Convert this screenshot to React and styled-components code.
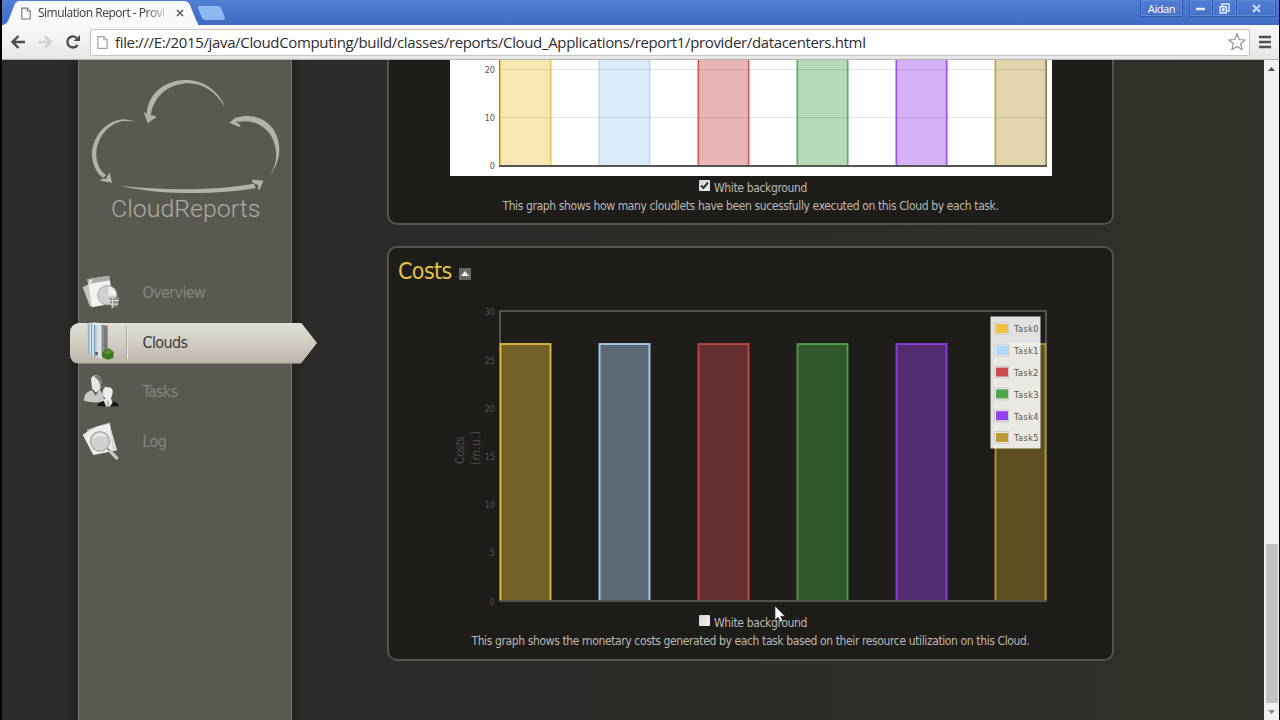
import React, { useState } from "react";
import styled, { createGlobalStyle } from "styled-components";

const GlobalStyle = createGlobalStyle`
  * {
    box-sizing: border-box;
  }
  body {
    margin: 0;
    background: #000;
    overflow: hidden;
  }
`;

const Window = styled.div`
  display: flex;
  flex-direction: column;
  width: 1280px;
  height: 720px;
  padding: 0 1px 0 2px;
  background: #000;
  overflow: hidden;
  font-family: "DejaVu Sans Condensed", "DejaVu Sans", sans-serif;
`;

const TitleBar = styled.div`
  display: flex;
  justify-content: space-between;
  height: 25px;
  flex: none;
  background: linear-gradient(#4f7ed4, #3f6bc3);
`;

const Tabs = styled.div`
  display: flex;
`;

const Tab = styled.div`
  display: grid;
  width: 196px;
  height: 25px;
  > * {
    grid-area: 1 / 1;
  }
`;

const TabContent = styled.div`
  display: flex;
  align-items: center;
  padding: 1px 0 0 19px;
`;

const TabTitle = styled.div`
  width: 132px;
  margin-left: 7px;
  font: 12px/18px "Open Sans", sans-serif;
  letter-spacing: -0.5px;
  white-space: nowrap;
  color: #3c3c40;
  -webkit-mask-image: linear-gradient(to right, #000 108px, transparent 132px);
  mask-image: linear-gradient(to right, #000 108px, transparent 132px);
`;

const TabClose = styled.svg`
  margin-left: 6px;
`;

const WindowButtons = styled.div`
  display: flex;
  padding-right: 3px;
`;

const WindowButton = styled.div`
  display: flex;
  align-items: center;
  justify-content: center;
  width: ${(p) => p.$width}px;
  height: 17px;
  margin-right: ${(p) => p.$gap || 0}px;
  border: 1px solid #3259a8;
  border-top: none;
  border-left-width: ${(p) => (p.$joined ? 0 : 1)}px;
  box-shadow: inset 0 0 0 1px #6088d4;
  color: #fff;
  font: 11px "Open Sans", sans-serif;
  letter-spacing: -0.4px;
`;

const Toolbar = styled.div`
  display: flex;
  align-items: center;
  flex: none;
  height: 35px;
  padding: 0 6px 0 9px;
  background: linear-gradient(#f9f9fa, #e6e6e7);
  border-bottom: 1px solid #b4b4b4;
`;

const AddressBar = styled.div`
  display: flex;
  align-items: center;
  width: 1160px;
  height: 27px;
  margin-left: 8px;
  padding: 0 3px 0 6px;
  border: 1px solid #c4c4c6;
  border-radius: 2px;
  background: #fff;
`;

const Url = styled.div`
  flex: 1;
  margin-left: 7px;
  font: 15px/22px "Open Sans", sans-serif;
  letter-spacing: -0.345px;
  color: #2d2d31;
  white-space: nowrap;
`;

const MenuButton = styled.svg`
  margin-left: 9px;
`;

const Viewport = styled.div`
  display: flex;
  height: 660px;
  overflow: hidden;
`;

const Page = styled.div`
  display: flex;
  width: 1262px;
  background: linear-gradient(to right, #2c2b2a, #2d2c29 50%, #302f28);
`;

const Sidebar = styled.div`
  width: 214px;
  margin-left: 76px;
  background: #5a5951;
  border: 1px solid #77766f;
  border-width: 0 1px;
  box-shadow: 0 0 12px 1px #1b1a17;
`;

const Logo = styled.svg`
  display: block;
  height: 170px;
`;

const Menu = styled.nav`
  display: flex;
  flex-direction: column;
  gap: 8.5px;
  padding-top: 43px;
`;

const MenuItem = styled.div`
  display: flex;
  align-items: center;
  width: 249px;
  height: 41px;
  margin-left: -9px;
  padding: 0 0 2px 12px;
  border-radius: 9px 0 0 9px;
  color: ${(p) => (p.$active ? "#3d3c38" : "#85847d")};
  font-size: 16px;
  letter-spacing: -0.65px;
  background: ${(p) => (p.$active ? "linear-gradient(#e0e0d6, #cfcabf 55%, #b9b2a8)" : "none")};
  clip-path: ${(p) => (p.$active ? "polygon(0 0, 231px 0, 247px 50%, 231px 100%, 0 100%)" : "none")};
`;

const IconSlot = styled.div`
  display: flex;
  align-items: center;
  width: 45px;
  height: 33px;
  margin-right: 15.5px;
  border-right: 1px solid ${(p) => (p.$active ? "#a9a69a" : "transparent")};
  box-shadow: ${(p) => (p.$active ? "1px 0 #e9e8e0" : "none")};
`;

const Content = styled.main`
  display: flex;
  flex-direction: column;
  gap: 21px;
  width: 727px;
  margin-left: 95px;
`;

const Card = styled.section`
  display: flex;
  flex-direction: column;
  align-items: center;
  width: 727px;
  height: ${(p) => p.$height}px;
  border: 2px solid #54534e;
  border-top-width: ${(p) => (p.$cut ? 0 : 2)}px;
  border-radius: ${(p) => (p.$cut ? "0 0 10px 10px" : "10px")};
  background: #1e1d1a;
`;

const CardTitle = styled.h2`
  display: flex;
  align-items: center;
  gap: 7px;
  align-self: flex-start;
  height: 28px;
  margin: 9px 0 0 9px;
  font-size: 23px;
  font-weight: 400;
  letter-spacing: -0.6px;
  color: #e3c343;
`;

const Collapse = styled.span`
  display: flex;
  align-items: center;
  justify-content: center;
  width: 12px;
  height: 12px;
  margin-top: 5px;
  background: #686762;
`;

const Chart = styled.svg`
  display: block;
  flex: none;
  background: ${(p) => (p.$white ? "#fff" : "none")};
`;

const Option = styled.label`
  display: flex;
  align-items: center;
  gap: 4px;
  height: 18px;
  margin-top: 3px;
  margin-left: 5px;
  font-size: 12px;
  letter-spacing: -0.36px;
  color: #bcb9b2;
`;

const Box = styled.span`
  display: flex;
  width: 11px;
  height: 11px;
  margin-bottom: 5px;
  background: linear-gradient(135deg, #d3d3d3, #f2f2f2);
  border-radius: 1px;
`;

const HiddenInput = styled.input`
  display: none;
`;

const Caption = styled.p`
  margin: 0;
  font-size: 12px;
  line-height: 18px;
  letter-spacing: -0.38px;
  white-space: nowrap;
  color: #bcb9b2;
`;

const Scrollbar = styled.div`
  display: flex;
  flex-direction: column;
  align-items: center;
  justify-content: space-between;
  width: 15px;
  background: #f0f0f0;
`;

const Thumb = styled.div`
  width: 12px;
  height: 159px;
  margin-top: auto;
  background: #c1c1c1;
`;

const Cursor = styled.svg`
  position: absolute;
  left: 774px;
  top: 605px;
`;

const tasks = [
  { name: "Task0", color: "#edc240", light: "#f8e6b3", dark: "#716028", x: 500 },
  { name: "Task1", color: "#afd8f8", light: "#dbecfb", dark: "#5a6974", x: 599 },
  { name: "Task2", color: "#cb4b4b", light: "#e8b4b4", dark: "#632f2e", x: 698 },
  { name: "Task3", color: "#4da74d", light: "#b6dab7", dark: "#30572c", x: 797 },
  { name: "Task4", color: "#9440ed", light: "#d5b1f8", dark: "#522a6e", x: 896 },
  { name: "Task5", color: "#bd9b33", light: "#e2d5ab", dark: "#5c4e20", x: 995 },
];

const PageIcon = ({ width, height, color }) => (
  <svg width={width} height={height} viewBox="0 0 12 15" fill="#fff" stroke={color} strokeWidth="1.3">
    <path d="M1 1H7.5L11 4.5V14H1Z" />
    <path d="M7.5 1V4.5H11" />
  </svg>
);

const CloudletsChart = () => (
  <Chart $white width="602" height="116" viewBox="450 60 602 116">
    {tasks.map((t) => (
      <rect key={t.name} x={t.x} y="60" width="51" height="106" fill={t.light} />
    ))}
    <path d="M500 69.5H1046M500 117.5H1046" stroke="#000" strokeOpacity=".1" />
    {tasks.map((t) => (
      <path
        key={t.name}
        d={`M${t.x + 0.3} 60V166M${t.x + 50.7} 60V166`}
        stroke={t.color}
        strokeOpacity=".85"
        strokeWidth="1.7"
      />
    ))}
    <path d="M499.5 60V166M1046.5 60V166" stroke="#545454" strokeOpacity=".7" />
    <path d="M499 166H1047" stroke="#545454" strokeWidth="2" />
    <g fontSize="9" fill="#545454" textAnchor="end">
      <text x="495" y="73">20</text>
      <text x="495" y="121">10</text>
      <text x="495" y="169">0</text>
    </g>
  </Chart>
);

const CostsChart = () => (
  <Chart width="602" height="326" viewBox="450 285 602 326">
    <rect x="500" y="311" width="546" height="290" fill="none" stroke="#545350" strokeWidth="2" />
    {tasks.map((t) => (
      <g key={t.name}>
        <rect x={t.x} y="344" width="51" height="256" fill={t.dark} />
        <path
          d={`M${t.x + 0.5} 600V344H${t.x + 50.5}V600`}
          fill="none"
          stroke={t.color}
          strokeOpacity=".85"
          strokeWidth="2"
        />
      </g>
    ))}
    <path d="M499 601H1047" stroke="#545350" strokeWidth="2" />
    <g fontSize="9" fill="#545350" textAnchor="end">
      {[30, 25, 20, 15, 10, 5, 0].map((n, i) => (
        <text key={n} x="495" y={315.4 + i * 48.2}>{n}</text>
      ))}
    </g>
    <g fontSize="12" fill="#4c4b48" textAnchor="middle">
      <text transform="translate(464 450) rotate(-90)" textLength="28">Costs</text>
      <text transform="translate(480 448) rotate(-90)" textLength="34">(m.u.)</text>
    </g>
    <rect x="990.5" y="316.5" width="50" height="132" fill="#fff" fillOpacity=".87" />
    {tasks.map((t, i) => (
      <g key={t.name}>
        <rect x="994.5" y={322.5 + i * 21.8} width="14" height="12" fill="none" stroke="#ccc" />
        <rect x="996" y={324 + i * 21.8} width="12" height="9" fill={t.color} />
        <text x="1014" y={332.3 + i * 21.8} fontSize="9" fill="#545454" textLength="24.5">{t.name}</text>
      </g>
    ))}
  </Chart>
);

const OverviewIcon = () => (
  <svg width="38" height="37" viewBox="64 48 114 108">
    <path d="M66 86L82 78L98 142L88 145Z" fill="#c3c3c1" />
    <path d="M80 62L145 52L160 134L94 146Z" fill="#f2f2f1" />
    <path d="M82 62L144 52L146 66L84 76Z" fill="#aaa9a7" />
    <circle cx="90" cy="68" r="4" fill="#eee" />
    <circle cx="140" cy="110" r="29" fill="#cfcfcd" stroke="#a5a5a3" strokeWidth="3" />
    <path d="M142 111L144 84A27 27 0 0 1 167 111Z" fill="#efefee" />
    <path d="M146 118H176L172 142L152 150Z" fill="#8e8e8b" />
    <path d="M146 126H174M148 137H172M156 118V148" stroke="#dededb" strokeWidth="3" />
  </svg>
);

const CloudsIcon = () => (
  <svg width="38" height="40" viewBox="66 194 114 120">
    <path d="M81 198L112 203V302L84 288Z" fill="#b9d0dc" />
    <path d="M87 200V289M95 202V293M104 203V298" stroke="#6f98af" strokeWidth="3" />
    <path d="M91 200V291M99 202V295" stroke="#e6f0f4" strokeWidth="3" />
    <path d="M88 197L105 194L139 202L112 205Z" fill="#ecebe6" />
    <path d="M111 204L126 202V304L111 300Z" fill="#dfdfdc" />
    <path d="M125 202L143 206V279L125 299Z" fill="#77797a" />
    <path d="M130 204V290" stroke="#989a9b" strokeWidth="3" />
    <path d="M106 284H113V294H106Z" fill="#4d5658" />
    <path d="M127 284L147 273L161 284L160 302L142 307L127 300Z" fill="#39771c" />
    <path d="M130 285L147 278L157 285L142 291Z" fill="#569632" />
  </svg>
);

const TasksIcon = () => (
  <svg width="38" height="37" viewBox="64 344 114 108">
    <path d="M70 426C70 402 82 397 94 394L105 410L116 394C125 398 130 405 130 428Q100 435 70 426Z" fill="#c7c7c5" />
    <path d="M91 360Q94 349 106 349Q121 350 123 368L118 393L106 402L94 388Z" fill="#e6e6e4" />
    <path d="M100 352Q118 345 124 364L121 385L114 366Z" fill="#797974" />
    <path d="M110 442Q110 431 128 427L141 421L157 427Q174 430 174 443Z" fill="#171716" />
    <path d="M128 421L150 418L156 430L148 443H136Z" fill="#e8e8e6" />
    <path d="M126 383Q133 376 148 380Q160 389 155 406L149 425L137 424L127 408Z" fill="#edeceb" />
    <path d="M124 397Q123 379 139 376Q158 378 158 397L151 387L134 384Z" fill="#5c5b56" />
    <path d="M140 424L144 424L147 439L142 443L138 437Z" fill="#b8b8b6" />
  </svg>
);

const LogIcon = () => (
  <svg width="38" height="40" viewBox="64 484 114 120">
    <path d="M78 510L148 488L154 530L90 550Z" fill="#b5b4b0" />
    <path d="M66 525L88 512L112 500L146 492L169 572L98 586Z" fill="#eeeeed" />
    <path d="M146 492L158 540L166 572L154 570Z" fill="#dadad8" />
    <circle cx="118" cy="545" r="29" fill="#d1d1cf" stroke="#aaaaa7" strokeWidth="4" />
    <path d="M96 538A25 25 0 0 1 139 532A44 44 0 0 0 96 538Z" fill="#ededeb" />
    <path d="M140 567L150 575" stroke="#777772" strokeWidth="5" />
    <path d="M149 575L168 595" stroke="#c6c6c4" strokeWidth="10" strokeLinecap="round" />
  </svg>
);

const menu = [
  { label: "Overview", Icon: OverviewIcon },
  { label: "Clouds", Icon: CloudsIcon },
  { label: "Tasks", Icon: TasksIcon },
  { label: "Log", Icon: LogIcon },
];

const CloudLogo = () => (
  <Logo width="213" viewBox="57 0 639 510">
    <g fill="#b2b1aa">
      <path d="M496 143C475 88 425 59 375 60C308 62 262 105 260 165L273 165C279 113 320 75 378 70C425 67 465 92 496 143Z" />
      <path d="M251 156L264 164L286 168L289 172L263 189Z" />
      <path d="M228 184L192 178C130 183 94 238 96 288C98 318 112 341 130 354L138 346C119 330 109 308 109 284C109 240 140 190 190 183Z" />
      <path d="M149 337L156 368L122 362L124 357L138 356Z" />
      <path d="M630 344C662 307 667 252 642 211C618 173 575 160 528 173L534 186C572 177 608 192 630 222C655 262 655 307 630 344Z" />
      <path d="M529 171L508 188L539 201L541 196L530 187L534 176Z" />
      <path d="M179 377C300 390 450 394 582 371L587 384C475 405 300 406 179 377Z" />
      <path d="M576 359L610 362L599 389L594 388L595 376L578 368Z" />
    </g>
    <text
      x="153"
      y="472"
      fill="#aaa9a2"
      fontFamily="Roboto, sans-serif"
      fontWeight="300"
      fontSize="69"
      textLength="448"
      lengthAdjust="spacingAndGlyphs"
    >
      CloudReports
    </text>
  </Logo>
);

const WhiteBackground = ({ initial }) => {
  const [checked, setChecked] = useState(initial);
  return (
    <Option>
      <HiddenInput type="checkbox" checked={checked} onChange={(e) => setChecked(e.target.checked)} />
      <Box>
        {checked && (
          <svg width="11" height="11" viewBox="0 0 11 11">
            <path d="M2 5.5L4.4 8L9 2.5" fill="none" stroke="#333" strokeWidth="2" />
          </svg>
        )}
      </Box>
      White background
    </Option>
  );
};

const Browser = () => (
  <>
    <TitleBar>
      <Tabs>
        <Tab>
          <svg width="196" height="25">
            <path d="M1 25Q5 24 7 19L12 6Q13 2 17 1H182Q186 1 188 5L194 20Q196 24 199 25Z" fill="#f8f9fa" />
          </svg>
          <TabContent>
            <PageIcon width={10} height={13} color="#74706f" />
            <TabTitle>Simulation Report - Provi</TabTitle>
            <TabClose width="8" height="8" viewBox="0 0 8 8">
              <path d="M1 1L7 7M7 1L1 7" stroke="#606166" strokeWidth="1.7" />
            </TabClose>
          </TabContent>
        </Tab>
        <svg width="30" height="25">
          <path d="M1 6H20Q22 6 23 8L27 18Q27 20 25 20H8Q5 20 4 18L0 8Q-1 6 1 6Z" fill="#8db8f0" />
        </svg>
      </Tabs>
      <WindowButtons>
        <WindowButton $width={43} $gap={6}>Aidan</WindowButton>
        <WindowButton $width={24}>
          <svg width="10" height="10"><path d="M0 6H9" stroke="#dfebff" strokeWidth="2.5" /></svg>
        </WindowButton>
        <WindowButton $width={24} $joined>
          <svg width="11" height="11" fill="none" stroke="#dfebff" strokeWidth="1.4">
            <path d="M3 3V1H10V8H8M1 3.7H7.3V10H1ZM3.5 6H5V7.5H3.5Z" />
          </svg>
        </WindowButton>
        <WindowButton $width={39} $joined>
          <svg width="9" height="9"><path d="M1 1L8 8M8 1L1 8" stroke="#c9dcfc" strokeWidth="2" /></svg>
        </WindowButton>
      </WindowButtons>
    </TitleBar>
    <Toolbar>
      <svg width="71" height="18" fill="none">
        <path d="M14 9H2M7.5 3L1.5 9L7.5 15" stroke="#4d4d50" strokeWidth="2.4" />
        <path d="M27 9H39M34 3.5L40 9L34 14.5" stroke="#d1d1d3" strokeWidth="2.4" />
        <path d="M66.5 12A5.5 5.5 0 1 1 65.5 4.8" stroke="#4d4d50" strokeWidth="2.3" />
        <path d="M69 2V8H62.5Z" fill="#4d4d50" />
      </svg>
      <AddressBar>
        <PageIcon width={11} height={15} color="#a09fa1" />
        <Url>file:///E:/2015/java/CloudComputing/build/classes/reports/Cloud_Applications/report1/provider/datacenters.html</Url>
        <svg width="18" height="18" viewBox="0 0 18 18">
          <path d="M9 1L11.2 6.5L17 7L12.7 10.8L14 16.5L9 13.4L4 16.5L5.3 10.8L1 7L6.8 6.5Z" fill="#fff" stroke="#919194" strokeWidth="1.2" />
        </svg>
      </AddressBar>
      <MenuButton width="13" height="14">
        <path d="M0 2H12M0 7H12M0 12H12" stroke="#515154" strokeWidth="2.7" />
      </MenuButton>
    </Toolbar>
  </>
);

const App = () => {
  const active = "Clouds";

  return (
    <Window>
      <GlobalStyle />
      <Browser />
      <Viewport>
        <Page>
          <Sidebar>
            <CloudLogo />
            <Menu>
              {menu.map(({ label, Icon }) => (
                <MenuItem key={label} $active={label === active}>
                  <IconSlot $active={label === active}>
                    <Icon />
                  </IconSlot>
                  {label}
                </MenuItem>
              ))}
            </Menu>
          </Sidebar>
          <Content>
            <Card $cut $height={165}>
              <CloudletsChart />
              <WhiteBackground initial={true} />
              <Caption>
                This graph shows how many cloudlets have been sucessfully executed on this Cloud by each task.
              </Caption>
            </Card>
            <Card $height={415}>
              <CardTitle>
                Costs
                <Collapse>
                  <svg width="8" height="5"><path d="M0 5L4 0L8 5Z" fill="#f4f4f2" /></svg>
                </Collapse>
              </CardTitle>
              <CostsChart />
              <WhiteBackground initial={false} />
              <Caption>
                This graph shows the monetary costs generated by each task based on their resource utilization on this Cloud.
              </Caption>
            </Card>
          </Content>
        </Page>
        <Scrollbar>
          <svg width="15" height="17"><path d="M4 11L7.5 7L11 11Z" fill="#505050" /></svg>
          <Thumb />
          <svg width="15" height="17"><path d="M4 7L7.5 11L11 7Z" fill="#8a8a8a" /></svg>
        </Scrollbar>
      </Viewport>
      <Cursor width="12" height="18" viewBox="0 0 12 18">
        <path d="M1 1V15L4.2 12.2L6.3 17L8.8 16L6.7 11.3H11Z" fill="#fff" stroke="#222" strokeWidth=".6" />
      </Cursor>
    </Window>
  );
};

export default App;
